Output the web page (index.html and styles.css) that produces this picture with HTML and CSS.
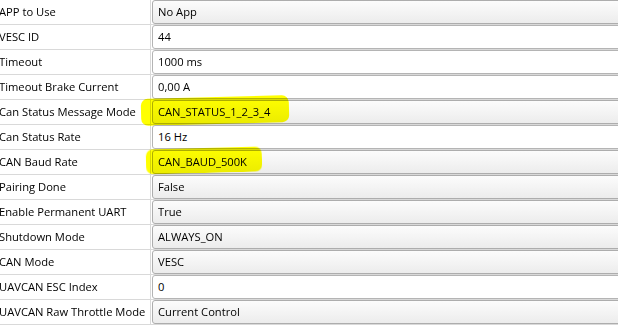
FILE: index.html
```html
<!DOCTYPE html>
<html lang="en">
<head>
    <meta charset="UTF-8">
    <meta name="viewport" content="width=device-width, initial-scale=1.0">
    <link rel="stylesheet" href="styles.css">
    <title>App Settings</title>
</head>
<body>

    <div class="table">
        <div class="row">
            <div class="name">APP to Use</div>
            <div class="cell"><div class="combo">No App</div></div>
        </div>
        <div class="row">
            <div class="name">VESC ID</div>
            <div class="cell"><div class="spin">44</div></div>
        </div>
        <div class="row">
            <div class="name">Timeout</div>
            <div class="cell"><div class="spin">1000 ms</div></div>
        </div>
        <div class="row">
            <div class="name">Timeout Brake Current</div>
            <div class="cell"><div class="spin">0,00 A</div></div>
        </div>
        <div class="row">
            <div class="name">Can Status Message Mode</div>
            <div class="cell">
                <div class="combo">CAN_STATUS_1_2_3_4</div>
                <div class="mark mark1"></div>
            </div>
        </div>
        <div class="row">
            <div class="name">Can Status Rate</div>
            <div class="cell"><div class="spin">16 Hz</div></div>
        </div>
        <div class="row">
            <div class="name">CAN Baud Rate</div>
            <div class="cell">
                <div class="combo">CAN_BAUD_500K</div>
                <div class="mark mark2"></div>
            </div>
        </div>
        <div class="row">
            <div class="name">Pairing Done</div>
            <div class="cell"><div class="combo">False</div></div>
        </div>
        <div class="row">
            <div class="name">Enable Permanent UART</div>
            <div class="cell"><div class="combo">True</div></div>
        </div>
        <div class="row">
            <div class="name">Shutdown Mode</div>
            <div class="cell"><div class="combo">ALWAYS_ON</div></div>
        </div>
        <div class="row">
            <div class="name">CAN Mode</div>
            <div class="cell"><div class="combo">VESC</div></div>
        </div>
        <div class="row">
            <div class="name">UAVCAN ESC Index</div>
            <div class="cell"><div class="spin">0</div></div>
        </div>
        <div class="row">
            <div class="name">UAVCAN Raw Throttle Mode</div>
            <div class="cell"><div class="combo">Current Control</div></div>
        </div>
    </div>

</body>
</html>
```

FILE: styles.css
```css
    :root {
        --grid-color: #d9d9d9;
        --edge-color: #adadad;
        --font-size: 11.2px;
    }

    html, body {
        margin: 0;
        overflow: hidden;
        background: #fff;
    }

    body {
        font-family: "Open Sans", "Liberation Sans", sans-serif;
        font-size: var(--font-size);
        color: #000;
    }

    .table {
        display: flex;
        flex-direction: column;
    }

    .row {
        display: flex;
        height: 25px;
    }

    .name {
        flex: 0 0 150px;
        height: 24px;
        line-height: 23px;
        text-indent: -1px;
        white-space: nowrap;
        overflow: hidden;
        border-right: 1px solid var(--grid-color);
        border-bottom: 1px solid var(--grid-color);
    }

    .cell {
        position: relative;
        flex: 1;
        min-width: 0;
        height: 24px;
        padding-left: 1px;
        overflow: hidden;
        border-bottom: 1px solid var(--grid-color);
    }

    .cell:has(.mark) {
        overflow: visible;
    }

    .combo,
    .spin {
        box-sizing: border-box;
        width: calc(100% + 6px);
        height: 24px;
        line-height: 21px;
        padding-left: 5px;
        white-space: nowrap;
        border: 1px solid var(--edge-color);
        border-radius: 3px;
    }

    .combo {
        background: linear-gradient(to bottom, #fcfcfc, #ececec);
    }

    .spin {
        background-color: #fff;
        border-color: #b4b4b4;
    }

    .mark {
        position: absolute;
        background-color: #ffff00;
        mix-blend-mode: multiply;
        border-radius: 7px;
    }

    .mark1 {
        left: -10px;
        top: -3px;
        width: 148px;
        height: 27px;
        transform: rotate(-1.5deg);
    }

    .mark2 {
        left: -5px;
        top: -2px;
        width: 116px;
        height: 25px;
        transform: rotate(-1.5deg);
    }
```
